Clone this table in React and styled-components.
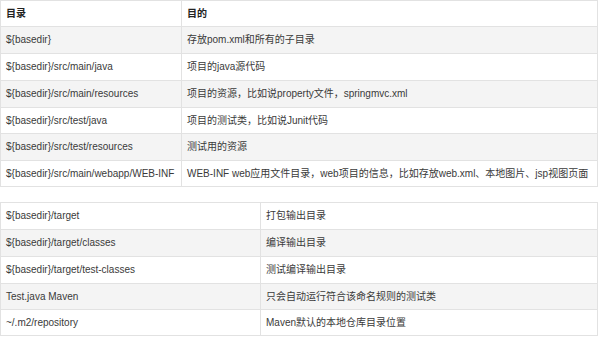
import React from "react";
import styled, { createGlobalStyle } from "styled-components";

const GlobalStyle = createGlobalStyle`
  html, body {
    margin: 0;
    padding: 0;
    background: #fff;
  }
  body {
    font-family: "Liberation Sans", Arial, "Noto Sans CJK SC", sans-serif;
    font-size: 10px;
    color: #333;
  }
`;

const Page = styled.div`
  width: 598px;
  display: flex;
  flex-direction: column;
  gap: 15px;
`;

const Table = styled.table`
  width: 100%;
  border-collapse: collapse;
  table-layout: fixed;
`;

const Row = styled.tr`
  height: ${(p) => p.$h}px;
  background: ${(p) => (p.$stripe ? "#f4f4f4" : "#fff")};
`;

const Cell = styled.td`
  border: 1px solid #e2e2e2;
  padding: 0 5px;
  line-height: 14px;
  white-space: nowrap;
  vertical-align: middle;
  font-weight: ${(p) => (p.$head ? "bold" : "normal")};
  color: ${(p) => (p.$head ? "#222" : "#3a3a3a")};
`;

const layout = [
  ["目录", "目的"],
  ["${basedir}", "存放pom.xml和所有的子目录"],
  ["${basedir}/src/main/java", "项目的java源代码"],
  ["${basedir}/src/main/resources", "项目的资源，比如说property文件，springmvc.xml"],
  ["${basedir}/src/test/java", "项目的测试类，比如说Junit代码"],
  ["${basedir}/src/test/resources", "测试用的资源"],
  ["${basedir}/src/main/webapp/WEB-INF", "WEB-INF web应用文件目录，web项目的信息，比如存放web.xml、本地图片、jsp视图页面"],
];
const layoutHeights = [26, 27, 27, 27, 26, 27, 26];

const output = [
  ["${basedir}/target", "打包输出目录"],
  ["${basedir}/target/classes", "编译输出目录"],
  ["${basedir}/target/test-classes", "测试编译输出目录"],
  ["Test.java Maven", "只会自动运行符合该命名规则的测试类"],
  ["~/.m2/repository", "Maven默认的本地仓库目录位置"],
];
const outputHeights = [27, 27, 27, 26, 26];

export default function App() {
  return (
    <>
      <GlobalStyle />
      <Page>
        <Table>
          <colgroup>
            <col style={{ width: 181 }} />
            <col />
          </colgroup>
          <tbody>
            {layout.map((r, i) => (
              <Row key={i} $h={layoutHeights[i]} $stripe={i % 2 === 1}>
                <Cell $head={i === 0}>{r[0]}</Cell>
                <Cell $head={i === 0}>{r[1]}</Cell>
              </Row>
            ))}
          </tbody>
        </Table>
        <Table>
          <colgroup>
            <col style={{ width: 260 }} />
            <col />
          </colgroup>
          <tbody>
            {output.map((r, i) => (
              <Row key={i} $h={outputHeights[i]} $stripe={i % 2 === 1}>
                <Cell>{r[0]}</Cell>
                <Cell>{r[1]}</Cell>
              </Row>
            ))}
          </tbody>
        </Table>
      </Page>
    </>
  );
}
